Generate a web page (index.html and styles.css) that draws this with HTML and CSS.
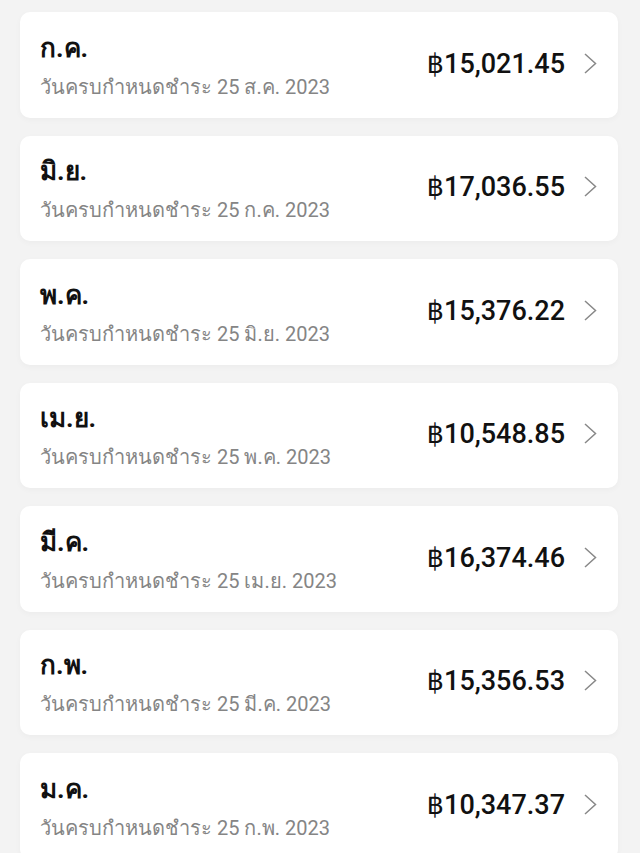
FILE: index.html
```html
<!DOCTYPE html>
<html lang="th">
<head>
<meta charset="utf-8">
<link rel="stylesheet" href="styles.css">
</head>
<body>
<div class="list">
  <div class="card"><div class="info"><div class="month">ก.ค.</div><div class="due">วันครบกำหนดชำระ 25 ส.ค. 2023</div></div><div class="amount">฿15,021.45</div><svg class="chev" viewBox="0 0 13 21"><path d="M1 1 L11.5 10.5 L1 20" /></svg></div>
  <div class="card"><div class="info"><div class="month">มิ.ย.</div><div class="due">วันครบกำหนดชำระ 25 ก.ค. 2023</div></div><div class="amount">฿17,036.55</div><svg class="chev" viewBox="0 0 13 21"><path d="M1 1 L11.5 10.5 L1 20" /></svg></div>
  <div class="card"><div class="info"><div class="month">พ.ค.</div><div class="due">วันครบกำหนดชำระ 25 มิ.ย. 2023</div></div><div class="amount">฿15,376.22</div><svg class="chev" viewBox="0 0 13 21"><path d="M1 1 L11.5 10.5 L1 20" /></svg></div>
  <div class="card"><div class="info"><div class="month">เม.ย.</div><div class="due">วันครบกำหนดชำระ 25 พ.ค. 2023</div></div><div class="amount">฿10,548.85</div><svg class="chev" viewBox="0 0 13 21"><path d="M1 1 L11.5 10.5 L1 20" /></svg></div>
  <div class="card"><div class="info"><div class="month">มี.ค.</div><div class="due">วันครบกำหนดชำระ 25 เม.ย. 2023</div></div><div class="amount">฿16,374.46</div><svg class="chev" viewBox="0 0 13 21"><path d="M1 1 L11.5 10.5 L1 20" /></svg></div>
  <div class="card"><div class="info"><div class="month">ก.พ.</div><div class="due">วันครบกำหนดชำระ 25 มี.ค. 2023</div></div><div class="amount">฿15,356.53</div><svg class="chev" viewBox="0 0 13 21"><path d="M1 1 L11.5 10.5 L1 20" /></svg></div>
  <div class="card"><div class="info"><div class="month">ม.ค.</div><div class="due">วันครบกำหนดชำระ 25 ก.พ. 2023</div></div><div class="amount">฿10,347.37</div><svg class="chev" viewBox="0 0 13 21"><path d="M1 1 L11.5 10.5 L1 20" /></svg></div>
</div>
</body>
</html>
```
FILE: styles.css
```css
html, body {
  margin: 0;
  padding: 0;
  background: #f3f3f3;
}
body {
  font-family: "Roboto", "Noto Sans", "DejaVu Sans", sans-serif;
  overflow: hidden;
  height: 853px;
}
.list {
  display: flex;
  flex-direction: column;
  gap: 18px;
  padding: 12px 22px 0 20px;
}
.card {
  background: #fff;
  border-radius: 10px;
  height: 105.5px;
  box-sizing: border-box;
  display: flex;
  align-items: center;
  padding: 0 21px 0 20px;
  box-shadow: 0 2px 6px rgba(0,0,0,0.03);
}
.info {
  flex: 1;
  display: flex;
  flex-direction: column;
  gap: 8px;
  margin-top: 4px;
}
.month {
  font-size: 26px;
  font-weight: 700;
  color: #111;
  line-height: 32px;
}
.due {
  font-size: 20px;
  color: #858585;
  line-height: 30px;
}
.amount {
  font-size: 27px;
  font-weight: 500;
  color: #111;
  margin-top: -2px;
}
.chev {
  width: 13px;
  height: 21px;
  margin-left: 19px;
  margin-top: -3px;
  fill: none;
  stroke: #888;
  stroke-width: 1.5;
}
```
